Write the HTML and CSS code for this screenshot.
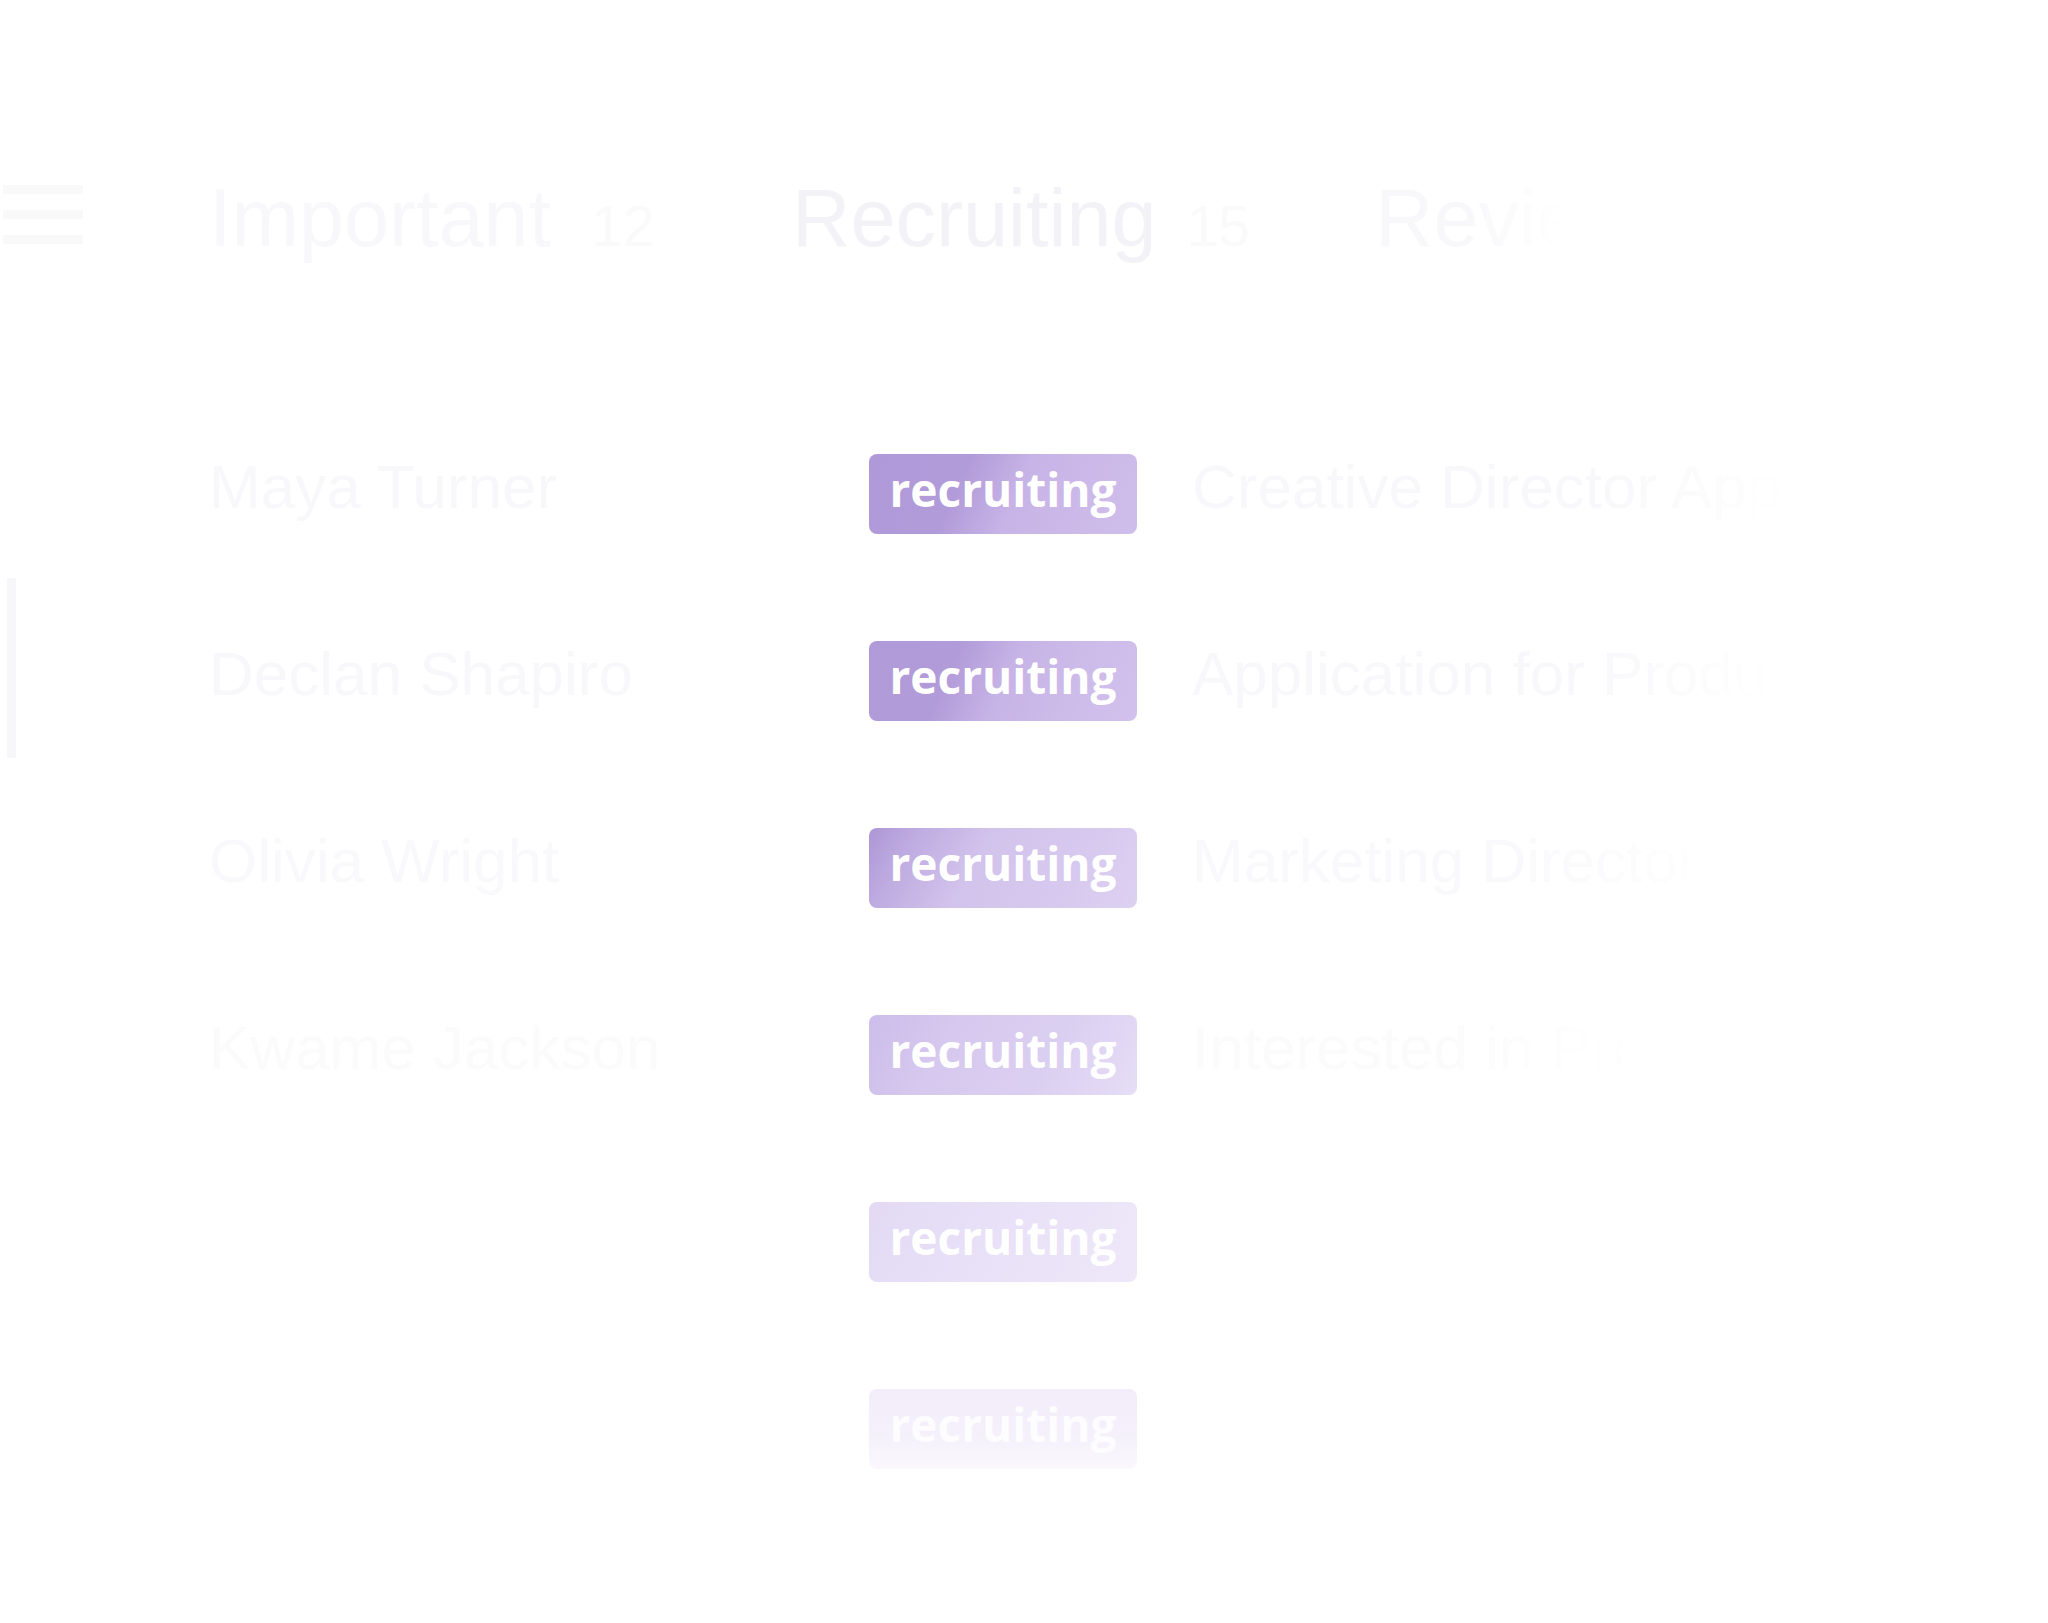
FILE: index.html
```html
<!DOCTYPE html>
<html lang="en">
<head>
<meta charset="utf-8">
<title>Recruiting</title>
<link rel="stylesheet" href="styles.css">
</head>
<body>
<div class="screen">
  <header class="topbar">
    <div class="menu" aria-label="Menu"><span></span><span></span><span></span></div>
    <nav class="tabs">
      <div class="tab tab-first"><span class="tab-label">Important</span><span class="tab-count">12</span></div>
      <div class="tab tab-active"><span class="tab-label">Recruiting</span><span class="tab-count">15</span></div>
      <div class="tab tab-faded"><span class="tab-label">Review</span><span class="tab-count">8</span></div>
    </nav>
  </header>
  <main class="list">
    <div class="row row-1">
      <div class="row-name">Maya Turner</div>
      <div class="pill pill-1">recruiting</div>
      <div class="row-title">Creative Director Application</div>
    </div>
    <div class="row row-2">
      <span class="row-indicator"></span>
      <div class="row-name">Declan Shapiro</div>
      <div class="pill pill-2">recruiting</div>
      <div class="row-title">Application for Product Role</div>
    </div>
    <div class="row row-3">
      <div class="row-name">Olivia Wright</div>
      <div class="pill pill-3">recruiting</div>
      <div class="row-title">Marketing Director</div>
    </div>
    <div class="row row-4">
      <div class="row-name">Kwame Jackson</div>
      <div class="pill pill-4">recruiting</div>
      <div class="row-title">Interested in Product</div>
    </div>
    <div class="row row-5">
      <div class="row-name"></div>
      <div class="pill pill-5">recruiting</div>
      <div class="row-title"></div>
    </div>
    <div class="row row-6">
      <div class="row-name"></div>
      <div class="pill pill-6">recruiting</div>
      <div class="row-title"></div>
    </div>
  </main>
</div>
</body>
</html>
```

FILE: styles.css
```css
html, body {
  margin: 0;
  padding: 0;
  background: #ffffff;
}

body {
  width: 2048px;
  height: 1623px;
  overflow: hidden;
  font-family: "Liberation Sans", Arial, sans-serif;
}

.screen {
  width: 2048px;
  height: 1623px;
}

/* ---------- top bar ---------- */
.topbar {
  display: flex;
  align-items: flex-start;
  padding-top: 172px;
  padding-left: 3px;
}

.menu {
  width: 80px;
  display: flex;
  flex-direction: column;
  gap: 16px;
  margin-top: 13px;
  margin-right: 126px;
}

.menu span {
  display: block;
  height: 9px;
  background: #f9f9fa;
}

.tabs {
  display: flex;
  align-items: baseline;
}

.tab {
  width: 583px;
  display: flex;
  align-items: baseline;
  gap: 30px;
  color: #f8f8fa;
}

.tab-first {
  gap: 40px;
}

.tab-label {
  font-size: 81px;
  line-height: 92px;
}

.tab-count {
  font-size: 57px;
  color: #fafafb;
}

.tab-active .tab-label {
  color: #f3f3f7;
}

.tab-faded {
  -webkit-mask-image: linear-gradient(to right, #000 0, #000 90px, transparent 190px);
  mask-image: linear-gradient(to right, #000 0, #000 90px, transparent 190px);
}

.tab-faded .tab-label {
  color: #f8f8fa;
}

/* ---------- list ---------- */
.list {
  margin-top: 136px;
}

.row {
  position: relative;
  height: 187px;
  display: grid;
  grid-template-columns: 605px 268px 1fr;
  column-gap: 55px;
  align-items: center;
  padding-left: 209px;
}

.row-indicator {
  position: absolute;
  left: 7px;
  top: -9px;
  width: 9px;
  height: 180px;
  background: #f7f7f9;
}

.row-name,
.row-title {
  font-size: 62px;
  line-height: 62px;
  padding-bottom: 13px;
  white-space: nowrap;
  color: #f8f8fa;
}

.row-title {
  -webkit-mask-image: linear-gradient(to right, #000 0, #000 410px, transparent 600px);
  mask-image: linear-gradient(to right, #000 0, #000 410px, transparent 600px);
}

.row-2 .row-title {
  -webkit-mask-image: linear-gradient(to right, #000 0, #000 390px, transparent 590px);
  mask-image: linear-gradient(to right, #000 0, #000 390px, transparent 590px);
}

.row-3 .row-title,
.row-3 .row-name {
  color: #f9f9fb;
}

.row-3 .row-title {
  -webkit-mask-image: linear-gradient(to right, #000 0, #000 320px, transparent 540px);
  mask-image: linear-gradient(to right, #000 0, #000 320px, transparent 540px);
}

.row-4 .row-name,
.row-4 .row-title {
  color: #fbfbfc;
}

.row-4 .row-title {
  -webkit-mask-image: linear-gradient(to right, #000 0, #000 240px, transparent 460px);
  mask-image: linear-gradient(to right, #000 0, #000 240px, transparent 460px);
}

/* ---------- pills ---------- */
.pill {
  box-sizing: border-box;
  width: 268px;
  height: 80px;
  padding-bottom: 10px;
  border-radius: 8px;
  display: flex;
  align-items: center;
  justify-content: center;
  font-family: "Open Sans", "Noto Sans", sans-serif;
  font-weight: 700;
  font-size: 46px;
  color: #ffffff;
}

.pill-1 {
  background: linear-gradient(114deg, #b099d8 0%, #b29bd9 34%, #c7b3e6 54%, #cbb8e8 72%, #cfbdeb 100%);
}

.pill-2 {
  background: linear-gradient(114deg, #b09ad8 0%, #b29bd9 31%, #c7b4e6 51%, #ccbae9 72%, #d2c1ec 100%);
}

.pill-3 {
  background: linear-gradient(120deg, #ac96d5 0%, #bca8df 13%, #d2c3ec 40%, #d6c8ee 70%, #ddd1f2 100%);
}

.pill-4 {
  background: linear-gradient(120deg, #ccbdea 0%, #d6c8ee 30%, #dbcff1 65%, #e6ddf6 100%);
}

.pill-5 {
  background: linear-gradient(120deg, #e3d9f4 0%, #e8e0f7 40%, #eee8f9 100%);
}

.pill-6 {
  background: linear-gradient(180deg, #f2edfa 0%, #f5f1fb 60%, #faf8fd 100%);
  color: #fdfcfe;
}
```
